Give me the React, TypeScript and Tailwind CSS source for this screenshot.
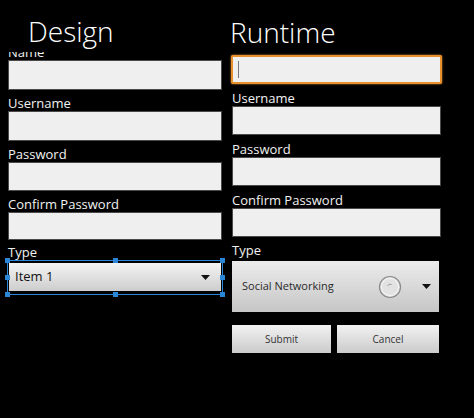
const font = { fontFamily: '"Open Sans", "Liberation Sans", sans-serif' };

function Label({ text, h, pb = 0 }: { text: string; h: string; pb?: number }) {
  return (
    <div className={`flex items-end ${h}`}>
      <span
        className="text-[13px] leading-[16px] text-[#f2f2f2]"
        style={pb ? { paddingBottom: pb } : undefined}
      >
        {text}
      </span>
    </div>
  );
}

function Field({ h }: { h: string }) {
  return <div className={`${h} w-full border border-[#4a4a4a] bg-[#efefef]`} />;
}

function Handle({ cls }: { cls: string }) {
  return <div className={`absolute h-[5px] w-[5px] bg-[#2b86d8] ${cls}`} />;
}

function Arrow() {
  return (
    <svg width="9" height="5" viewBox="0 0 9 5">
      <path d="M0 0 L9 0 L4.5 5 Z" fill="#111" />
    </svg>
  );
}

function DesignColumn() {
  return (
    <div className="flex w-[214px] flex-col">
      <div className="relative z-10 -mb-[13px] h-[52px] bg-black pl-[20px] pt-[17px]">
        <span className="text-[28px] font-light leading-[28px] text-white">Design</span>
      </div>
      <Label text="Name" h="h-[21px]" />
      <Field h="h-[30px]" />
      <Label text="Username" h="h-[21px]" />
      <Field h="h-[30px]" />
      <Label text="Password" h="h-[21px]" />
      <Field h="h-[29px]" />
      <Label text="Confirm Password" h="h-[21px]" />
      <Field h="h-[28px]" />
      <Label text="Type" h="h-[20px]" />
      <div className="relative -mx-[1px] border border-[#2b86d8] px-[1px] pb-[3px] pt-[2px]">
        <div className="flex h-[28px] items-center justify-between bg-gradient-to-b from-[#f4f4f4] to-[#cdcdcd] pl-[6px] pr-[11px]">
          <span className="text-[13px] text-[#111]">Item 1</span>
          <Arrow />
        </div>
        <Handle cls="-left-[3px] -top-[3px]" />
        <Handle cls="left-[105px] -top-[3px]" />
        <Handle cls="-right-[3px] -top-[3px]" />
        <Handle cls="-left-[3px] top-[14px]" />
        <Handle cls="-right-[3px] top-[14px]" />
        <Handle cls="-left-[3px] -bottom-[3px]" />
        <Handle cls="left-[105px] -bottom-[3px]" />
        <Handle cls="-right-[3px] -bottom-[3px]" />
      </div>
    </div>
  );
}

function RuntimeColumn() {
  return (
    <div className="flex w-[211px] flex-col">
      <div className="h-[55px] pt-[18px]">
        <span className="-ml-[1px] text-[28px] font-light leading-[28px] text-white">Runtime</span>
      </div>
      <div className="flex h-[29px] items-center rounded-[2px] border-2 border-[#e8912c] bg-[#efefef] pl-[5px] shadow-[0_0_2px_#f0a040]">
        <div className="h-[17px] w-[1px] bg-[#777]" />
      </div>
      <div className="px-[1px]">
        <Label text="Username" h="h-[22px]" />
        <Field h="h-[29px]" />
        <Label text="Password" h="h-[22px]" />
        <Field h="h-[29px]" />
        <Label text="Confirm Password" h="h-[22px]" />
        <Field h="h-[29px]" />
        <Label text="Type" h="h-[24px]" pb={3} />
        <div className="mr-[2px] flex h-[51px] items-center bg-gradient-to-b from-[#ececec] to-[#c6c6c6] pl-[10px] pr-[8px]">
          <span className="flex-1 text-[11px] font-medium text-[#2a2a2a]">Social Networking</span>
          <svg width="24" height="24" viewBox="0 0 24 24" className="mr-[20px]">
            <circle cx="12" cy="12" r="10.5" fill="#e2e2e2" stroke="#8a8a8a" strokeWidth="1.2" />
            <circle cx="12" cy="12" r="8.5" fill="none" stroke="#f6f6f6" strokeWidth="1" />
            <path d="M9.5 11 A3 3 0 0 1 13.5 9.5" fill="none" stroke="#9a9a9a" strokeWidth="1" />
          </svg>
          <Arrow />
        </div>
        <div className="mr-[2px] mt-[13px] flex gap-[6px]">
          <button className="flex h-[28px] w-[99px] items-center justify-center bg-gradient-to-b from-[#f2f2f2] to-[#cbcbcb] text-[10px] text-[#333]">
            Submit
          </button>
          <button className="flex h-[28px] flex-1 items-center justify-center bg-gradient-to-b from-[#f2f2f2] to-[#cbcbcb] text-[10px] text-[#333]">
            Cancel
          </button>
        </div>
      </div>
    </div>
  );
}

export default function App() {
  return (
    <div className="flex h-[418px] w-[474px] gap-[9px] overflow-hidden bg-black pl-[8px]" style={font}>
      <DesignColumn />
      <RuntimeColumn />
    </div>
  );
}
